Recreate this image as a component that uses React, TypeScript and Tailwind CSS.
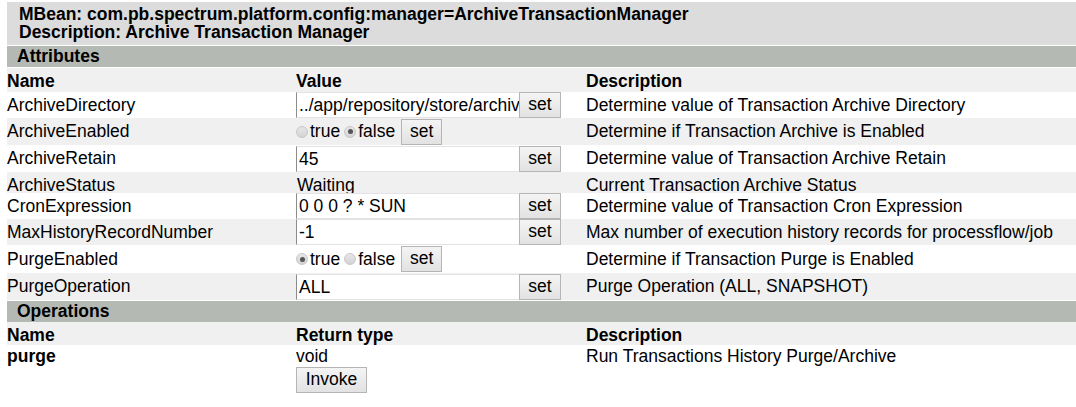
import React from "react";

type Attr = {
    name: string;
    kind: "text" | "radio" | "plain";
    value: string;
    desc: string;
    h: string;
};

const attrs: Attr[] = [
    { name: "ArchiveDirectory", kind: "text", value: "../app/repository/store/archive", desc: "Determine value of Transaction Archive Directory", h: "h-[26px]" },
    { name: "ArchiveEnabled", kind: "radio", value: "false", desc: "Determine if Transaction Archive is Enabled", h: "h-[27px]" },
    { name: "ArchiveRetain", kind: "text", value: "45", desc: "Determine value of Transaction Archive Retain", h: "h-[27px]" },
    { name: "ArchiveStatus", kind: "plain", value: "Waiting", desc: "Current Transaction Archive Status", h: "h-[21px]" },
    { name: "CronExpression", kind: "text", value: "0 0 0 ? * SUN", desc: "Determine value of Transaction Cron Expression", h: "h-[26px]" },
    { name: "MaxHistoryRecordNumber", kind: "text", value: "-1", desc: "Max number of execution history records for processflow/job", h: "h-[26px]" },
    { name: "PurgeEnabled", kind: "radio", value: "true", desc: "Determine if Transaction Purge is Enabled", h: "h-[28px]" },
    { name: "PurgeOperation", kind: "text", value: "ALL", desc: "Purge Operation (ALL, SNAPSHOT)", h: "h-[27px]" },
];

const Btn = ({ label, className = "" }: { label: string; className?: string }) => (
    <button
        className={`h-[26px] border border-[#b5b5b5] bg-gradient-to-b from-[#f4f4f4] to-[#e2e2e2] text-[17.5px] leading-none text-black ${className}`}
    >
        {label}
    </button>
);

const Radio = ({ checked }: { checked: boolean }) => (
    <span className="inline-flex h-[12px] w-[12px] items-center justify-center rounded-full border border-[#c8c8c8] bg-gradient-to-b from-[#e6e6e6] to-[#d4d4d4]">
        {checked && <span className="h-[5px] w-[5px] rounded-full bg-[#555]" />}
    </span>
);

const SectionBar = ({ title }: { title: string }) => (
    <div className="mt-[1px] h-[21px] bg-[#b4b9b4] pl-[10px] font-bold leading-[21px]">
        {title}
    </div>
);

export default function App() {
    return (
        <div className="min-h-[407px] bg-white pl-[7px] pt-[2px] font-['Liberation_Sans',Arial,sans-serif] text-[17.5px] text-black">
            {/* MBean header */}
            <div className="h-[43px] bg-[#dcdcdc] pl-[12px] pt-[3px] font-bold leading-[18px]">
                <div>MBean: com.pb.spectrum.platform.config:manager=ArchiveTransactionManager</div>
                <div>Description: Archive Transaction Manager</div>
            </div>

            <SectionBar title="Attributes" />
            <div className="mt-[1px] grid h-[24px] grid-cols-[289px_290px_1fr] items-center bg-[#f0f0f0] font-bold">
                <div>Name</div>
                <div>Value</div>
                <div>Description</div>
            </div>

            {attrs.map((a, i) => (
                <div
                    key={a.name}
                    className={`grid grid-cols-[289px_290px_1fr] items-center ${
                        i % 2 === 1 ? "bg-[#f0f0f0]" : "bg-white"
                    } ${a.h}`}
                >
                    <div className="whitespace-nowrap">{a.name}</div>
                    <div className="flex items-center">
                        {a.kind === "text" && (
                            <>
                                <div className="h-[26px] w-[223px] overflow-hidden whitespace-nowrap border-l border-t border-b border-l-[#8c8c8c] border-t-[#e3e3e3] border-b-[#e3e3e3] bg-white pl-[2px] leading-[25px]">
                                    {a.value}
                                </div>
                                <Btn label="set" className="w-[42px]" />
                            </>
                        )}
                        {a.kind === "radio" && (
                            <div className="flex items-center">
                                <Radio checked={a.value === "true"} />
                                <span className="ml-[2px]">true</span>
                                <span className="ml-[4px]" />
                                <Radio checked={a.value === "false"} />
                                <span className="ml-[2px]">false</span>
                                <Btn label="set" className="ml-[6px] w-[41px]" />
                            </div>
                        )}
                        {a.kind === "plain" && <span className="pl-[1px]">{a.value}</span>}
                    </div>
                    <div className="whitespace-nowrap">{a.desc}</div>
                </div>
            ))}

            <SectionBar title="Operations" />
            <div className="grid h-[23px] grid-cols-[289px_290px_1fr] items-center bg-[#f0f0f0] font-bold">
                <div>Name</div>
                <div>Return type</div>
                <div>Description</div>
            </div>
            <div className="grid grid-cols-[289px_290px_1fr] items-start pt-[1px]">
                <div className="font-bold leading-[21px]">purge</div>
                <div className="flex flex-col items-start">
                    <span className="leading-[21px]">void</span>
                    <Btn label="Invoke" className="w-[71px]" />
                </div>
                <div className="leading-[21px]">Run Transactions History Purge/Archive</div>
            </div>
        </div>
    );
}
